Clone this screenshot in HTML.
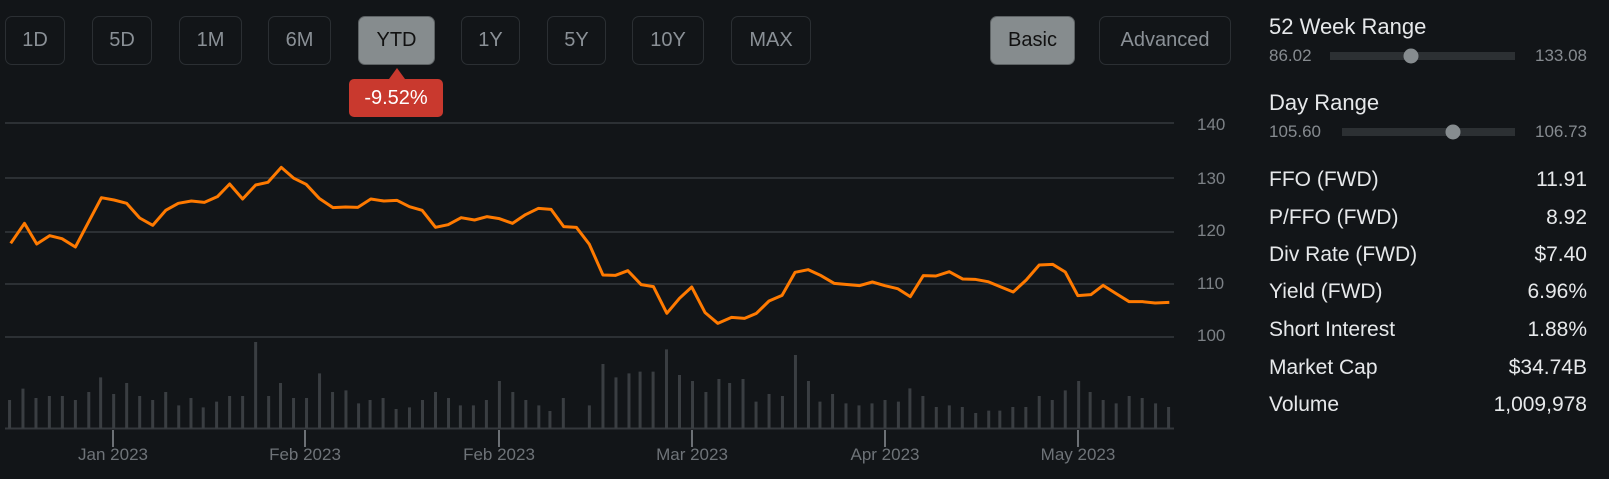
<!DOCTYPE html>
<html><head><meta charset="utf-8"><style>
body{margin:0;width:1609px;height:479px;background:#121518;overflow:hidden;font-family:"Liberation Sans",sans-serif;position:relative}
.b{position:absolute;top:16px;height:49px;border:1px solid #2b2f33;border-radius:7px;box-sizing:border-box;color:#8a9096;font-size:20px;display:flex;align-items:center;justify-content:center}
.a{background:#868c8e;color:#111;border-color:#5d6264}
.l{position:absolute;left:1269px;color:#e6e8ea;font-size:21px}
.v{position:absolute;right:22px;color:#e6e8ea;font-size:21px}
.s{position:absolute;color:#868b90;font-size:17px}
.yl{position:absolute;left:1197px;color:#7c8186;font-size:17px}
.xl{position:absolute;color:#6e7378;font-size:17px;transform:translateX(-50%)}
</style></head><body>
<div class="b" style="left:5px;width:60px">1D</div>
<div class="b" style="left:92px;width:60px">5D</div>
<div class="b" style="left:179px;width:63px">1M</div>
<div class="b" style="left:268px;width:63px">6M</div>
<div class="b a" style="left:358px;width:77px">YTD</div>
<div class="b" style="left:461px;width:59px">1Y</div>
<div class="b" style="left:547px;width:59px">5Y</div>
<div class="b" style="left:632px;width:72px">10Y</div>
<div class="b" style="left:731px;width:80px">MAX</div>
<div class="b a" style="left:990px;width:85px">Basic</div>
<div class="b" style="left:1099px;width:132px">Advanced</div>
<div style="position:absolute;left:389px;top:68px;width:0;height:0;border-left:8px solid transparent;border-right:8px solid transparent;border-bottom:11px solid #c9392e"></div>
<div style="position:absolute;left:349px;top:79px;width:94px;height:38px;background:#c9392e;border-radius:5px;color:#fff;font-size:20px;display:flex;align-items:center;justify-content:center">-9.52%</div>

<svg style="position:absolute;left:0;top:0" width="1609" height="479">
<g stroke="#2c3034" stroke-width="2">
<line x1="5" y1="123" x2="1174" y2="123"/><line x1="5" y1="178" x2="1174" y2="178"/><line x1="5" y1="232" x2="1174" y2="232"/><line x1="5" y1="284" x2="1174" y2="284"/><line x1="5" y1="337" x2="1174" y2="337"/>
<line x1="5" y1="428.5" x2="1174" y2="428.5" stroke="#34383c"/>
</g>
<g stroke="#8a8f94" stroke-width="1.5">
<line x1="113" y1="430" x2="113" y2="447"/><line x1="305" y1="430" x2="305" y2="447"/><line x1="499" y1="430" x2="499" y2="447"/><line x1="692" y1="430" x2="692" y2="447"/><line x1="885" y1="430" x2="885" y2="447"/><line x1="1078" y1="430" x2="1078" y2="447"/>
</g>
<g transform="translate(0,320) scale(0.38270,0.33333)" stroke="#3a3e42" stroke-width="3" fill="none">
<path vector-effect="non-scaling-stroke" d="M25 325V240M60 325V206M94 325V234M129 325V228M163 325V228M197 325V240M232 325V216M263 325V172M297 325V222M331 325V189M365 325V228M399 325V240M433 325V216M467 325V256M499 325V234M531 325V262M566 325V245M600 325V228M634 325V228M668 325V66M702 325V228M733 325V189M767 325V234M801 325V234M835 325V160M869 325V216M904 325V211M937 325V250M967 325V240M1001 325V234M1035 325V267M1070 325V262M1104 325V240M1138 325V216M1172 325V234M1203 325V256M1237 325V256M1271 325V240M1305 325V183M1340 325V216M1374 325V240M1408 325V256M1437 325V273M1472 325V234M1540 325V256"/>
</g>
<g transform="translate(580,320) scale(0.38270,0.33333)" stroke="#3a3e42" stroke-width="3" fill="none">
<path vector-effect="non-scaling-stroke" d="M60 325V132M94 325V172M128 325V160M157 325V155M191 325V155M226 325V88M260 325V165M294 325V183M329 325V216M363 325V177M391 325V189M426 325V177M460 325V245M494 325V222M529 325V228M563 325V105M597 325V183M627 325V245M660 325V222M695 325V250M729 325V256M763 325V250M797 325V240M832 325V245M862 325V205M896 325V228M931 325V261M965 325V256M999 325V261M1034 325V279M1068 325V272M1097 325V272M1131 325V261M1165 325V261M1200 325V228M1234 325V240M1268 325V211M1303 325V183M1333 325V216M1367 325V240M1401 325V250M1435 325V228M1469 325V234M1504 325V250M1538 325V261"/>
</g>
<g transform="translate(0,140) scale(0.38270,0.33333)" fill="none" stroke="#ff7a00" stroke-width="3" stroke-linejoin="round">
<polyline vector-effect="non-scaling-stroke" points="28,310 64,250 96,312 130,287 162,296 197,321 231,247 265,173 298,180 331,190 365,234 399,256 433,211 466,190 500,183 534,187 568,170 600,132 634,177 668,135 700,127 735,82 768,115 800,133 834,175 870,203 903,201 935,202 969,177 1003,183 1037,181 1070,200 1103,211 1138,262 1171,254 1205,233 1240,240 1272,230 1305,236 1339,250 1373,224 1407,205 1440,208 1473,260 1506,262 1540,313 1575.5,405 1608.5,406 1640.5,392 1675.5,434 1707.5,440 1742.5,520 1775.5,475 1807.5,441 1842.5,518 1875.5,550 1911.5,532 1945.5,535 1976.5,520 2009.5,483 2043.5,466 2077.5,397 2111.5,389 2145.5,407 2179.5,430 2245.5,437 2279.5,426 2312.5,437 2345.5,446 2378.5,470 2412.5,407 2445.5,408 2480.5,395 2515.5,417 2547.5,418 2581.5,425 2615.5,441 2647.5,456 2681.5,420 2715.5,375 2750.5,373 2783.5,396 2816.5,467 2850.5,464 2882.5,436 2915.5,460 2950.5,485 2985.5,485 3018.5,489 3055.5,487"/>
</g>
<rect x="1330" y="52" width="185" height="8" fill="#2c3033"/><circle cx="1411" cy="56" r="7.5" fill="#868c8f"/>
<rect x="1342" y="128" width="173" height="8" fill="#2c3033"/><circle cx="1453" cy="132" r="7.5" fill="#868c8f"/>
</svg>

<div class="yl" style="top:115px">140</div>
<div class="yl" style="top:169px">130</div>
<div class="yl" style="top:221px">120</div>
<div class="yl" style="top:274px">110</div>
<div class="yl" style="top:326px">100</div>
<div class="xl" style="left:113px;top:445px">Jan 2023</div>
<div class="xl" style="left:305px;top:445px">Feb 2023</div>
<div class="xl" style="left:499px;top:445px">Feb 2023</div>
<div class="xl" style="left:692px;top:445px">Mar 2023</div>
<div class="xl" style="left:885px;top:445px">Apr 2023</div>
<div class="xl" style="left:1078px;top:445px">May 2023</div>

<div class="l" style="top:14px;font-size:22px">52 Week Range</div>
<div class="s" style="left:1269px;top:46px">86.02</div>
<div class="s" style="right:22px;top:46px">133.08</div>
<div class="l" style="top:90px;font-size:22px">Day Range</div>
<div class="s" style="left:1269px;top:122px">105.60</div>
<div class="s" style="right:22px;top:122px">106.73</div>

<div class="l" style="top:168px">FFO (FWD)</div><div class="v" style="top:168px">11.91</div>
<div class="l" style="top:206px">P/FFO (FWD)</div><div class="v" style="top:206px">8.92</div>
<div class="l" style="top:243px">Div Rate (FWD)</div><div class="v" style="top:243px">$7.40</div>
<div class="l" style="top:280px">Yield (FWD)</div><div class="v" style="top:280px">6.96%</div>
<div class="l" style="top:318px">Short Interest</div><div class="v" style="top:318px">1.88%</div>
<div class="l" style="top:356px">Market Cap</div><div class="v" style="top:356px">$34.74B</div>
<div class="l" style="top:393px">Volume</div><div class="v" style="top:393px">1,009,978</div>
</body></html>
